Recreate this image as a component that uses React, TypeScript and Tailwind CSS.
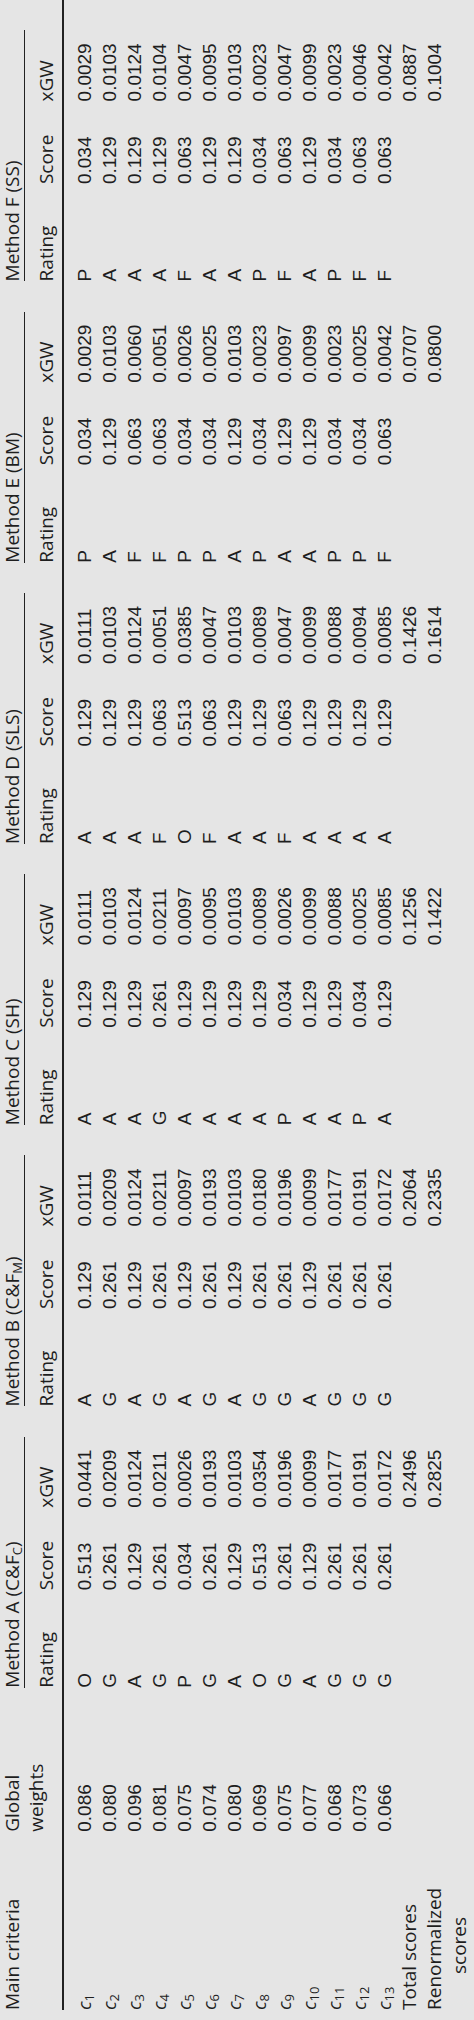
import React from 'react';

type Cell = [string, string, string];

interface Row {
  label: React.ReactNode;
  gw: string;
  methods: Cell[];
}

const c = (n: number) => (
  <span>
    <i>c</i>
    <sub className="text-[13px] not-italic">{n}</sub>
  </span>
);

const rows: Row[] = [
  { label: c(1), gw: '0.086', methods: [['O', '0.513', '0.0441'], ['A', '0.129', '0.0111'], ['A', '0.129', '0.0111'], ['A', '0.129', '0.0111'], ['P', '0.034', '0.0029'], ['P', '0.034', '0.0029']] },
  { label: c(2), gw: '0.080', methods: [['G', '0.261', '0.0209'], ['G', '0.261', '0.0209'], ['A', '0.129', '0.0103'], ['A', '0.129', '0.0103'], ['A', '0.129', '0.0103'], ['A', '0.129', '0.0103']] },
  { label: c(3), gw: '0.096', methods: [['A', '0.129', '0.0124'], ['A', '0.129', '0.0124'], ['A', '0.129', '0.0124'], ['A', '0.129', '0.0124'], ['F', '0.063', '0.0060'], ['A', '0.129', '0.0124']] },
  { label: c(4), gw: '0.081', methods: [['G', '0.261', '0.0211'], ['G', '0.261', '0.0211'], ['G', '0.261', '0.0211'], ['F', '0.063', '0.0051'], ['F', '0.063', '0.0051'], ['A', '0.129', '0.0104']] },
  { label: c(5), gw: '0.075', methods: [['P', '0.034', '0.0026'], ['A', '0.129', '0.0097'], ['A', '0.129', '0.0097'], ['O', '0.513', '0.0385'], ['P', '0.034', '0.0026'], ['F', '0.063', '0.0047']] },
  { label: c(6), gw: '0.074', methods: [['G', '0.261', '0.0193'], ['G', '0.261', '0.0193'], ['A', '0.129', '0.0095'], ['F', '0.063', '0.0047'], ['P', '0.034', '0.0025'], ['A', '0.129', '0.0095']] },
  { label: c(7), gw: '0.080', methods: [['A', '0.129', '0.0103'], ['A', '0.129', '0.0103'], ['A', '0.129', '0.0103'], ['A', '0.129', '0.0103'], ['A', '0.129', '0.0103'], ['A', '0.129', '0.0103']] },
  { label: c(8), gw: '0.069', methods: [['O', '0.513', '0.0354'], ['G', '0.261', '0.0180'], ['A', '0.129', '0.0089'], ['A', '0.129', '0.0089'], ['P', '0.034', '0.0023'], ['P', '0.034', '0.0023']] },
  { label: c(9), gw: '0.075', methods: [['G', '0.261', '0.0196'], ['G', '0.261', '0.0196'], ['P', '0.034', '0.0026'], ['F', '0.063', '0.0047'], ['A', '0.129', '0.0097'], ['F', '0.063', '0.0047']] },
  { label: c(10), gw: '0.077', methods: [['A', '0.129', '0.0099'], ['A', '0.129', '0.0099'], ['A', '0.129', '0.0099'], ['A', '0.129', '0.0099'], ['A', '0.129', '0.0099'], ['A', '0.129', '0.0099']] },
  { label: c(11), gw: '0.068', methods: [['G', '0.261', '0.0177'], ['G', '0.261', '0.0177'], ['A', '0.129', '0.0088'], ['A', '0.129', '0.0088'], ['P', '0.034', '0.0023'], ['P', '0.034', '0.0023']] },
  { label: c(12), gw: '0.073', methods: [['G', '0.261', '0.0191'], ['G', '0.261', '0.0191'], ['P', '0.034', '0.0025'], ['A', '0.129', '0.0094'], ['P', '0.034', '0.0025'], ['F', '0.063', '0.0046']] },
  { label: c(13), gw: '0.066', methods: [['G', '0.261', '0.0172'], ['G', '0.261', '0.0172'], ['A', '0.129', '0.0085'], ['A', '0.129', '0.0085'], ['F', '0.063', '0.0042'], ['F', '0.063', '0.0042']] },
];

const totals = ['0.2496', '0.2064', '0.1256', '0.1426', '0.0707', '0.0887'];
const renorm = ['0.2825', '0.2335', '0.1422', '0.1614', '0.0800', '0.1004'];

const methods: React.ReactNode[] = [
  <>Method A (C&amp;F<sub className="text-[13px]">C</sub>)</>,
  <>Method B (C&amp;F<sub className="text-[13px]">M</sub>)</>,
  <>Method C (SH)</>,
  <>Method D (SLS)</>,
  <>Method E (BM)</>,
  <>Method F (SS)</>,
];

const label = 'font-["Open_Sans",sans-serif]';
const num = 'font-["Liberation_Sans",Arial,sans-serif]';
const td = `p-0 h-[25px] leading-[25px] align-top whitespace-nowrap text-left font-normal ${num}`;

export default function App() {
  return (
    <div className="w-[474px] h-[2020px] overflow-hidden bg-[#e5e5e5]">
      <div className="w-[2020px] h-[474px] origin-top-left [transform:translateY(2020px)_rotate(-90deg)] pl-[10px] text-[19px] text-[#1e1e1e]">
        <table className="table-fixed border-collapse">
          <colgroup>
            <col className="w-[187px]" />
            <col className="w-[156px]" />
            {methods.map((_, i) => (
              <React.Fragment key={i}>
                <col className="w-[99px]" />
                <col className="w-[84px]" />
                <col className="w-[103px]" />
              </React.Fragment>
            ))}
          </colgroup>
          <thead className={`border-b-2 border-[#222] ${label}`}>
            <tr>
              <th rowSpan={2} className="p-0 align-top text-left font-normal leading-[24px] whitespace-nowrap">
                Main criteria
              </th>
              <th rowSpan={2} className="p-0 align-top text-left font-normal leading-[24px]">
                Global
                <br />
                weights
              </th>
              {methods.map((m, i) => (
                <th key={i} colSpan={3} className="p-0 align-top text-left font-normal">
                  <div className="w-[251px] h-[25px] leading-[24px] border-b-[1.5px] border-[#222] whitespace-nowrap">{m}</div>
                </th>
              ))}
            </tr>
            <tr>
              {methods.map((_, i) => (
                <React.Fragment key={i}>
                  <th className="p-0 pt-[9px] pb-[4px] leading-[24px] text-left font-normal">Rating</th>
                  <th className="p-0 pt-[9px] pb-[4px] leading-[24px] text-left font-normal">Score</th>
                  <th className="p-0 pt-[9px] pb-[4px] leading-[24px] text-left font-normal">xGW</th>
                </React.Fragment>
              ))}
            </tr>
          </thead>
          <tbody>
            <tr className="h-[9px]">
              <td colSpan={20} className="p-0" />
            </tr>
            {rows.map((r, i) => (
              <tr key={i}>
                <td className={`p-0 h-[25px] leading-[25px] align-top ${label}`}>{r.label}</td>
                <td className={td}>{r.gw}</td>
                {r.methods.map((m, j) => (
                  <React.Fragment key={j}>
                    <td className={td}>{m[0]}</td>
                    <td className={td}>{m[1]}</td>
                    <td className={td}>{m[2]}</td>
                  </React.Fragment>
                ))}
              </tr>
            ))}
            <tr>
              <td className={`p-0 h-[25px] leading-[25px] align-top whitespace-nowrap ${label}`}>Total scores</td>
              <td className={td} />
              {totals.map((t, j) => (
                <React.Fragment key={j}>
                  <td className={td} />
                  <td className={td} />
                  <td className={td}>{t}</td>
                </React.Fragment>
              ))}
            </tr>
            <tr>
              <td className={`p-0 leading-[25px] align-top whitespace-nowrap ${label}`}>
                <div>Renormalized</div>
                <div className="pl-[36px]">scores</div>
              </td>
              <td className={td} />
              {renorm.map((t, j) => (
                <React.Fragment key={j}>
                  <td className={td} />
                  <td className={td} />
                  <td className={td}>{t}</td>
                </React.Fragment>
              ))}
            </tr>
          </tbody>
        </table>
      </div>
    </div>
  );
}
